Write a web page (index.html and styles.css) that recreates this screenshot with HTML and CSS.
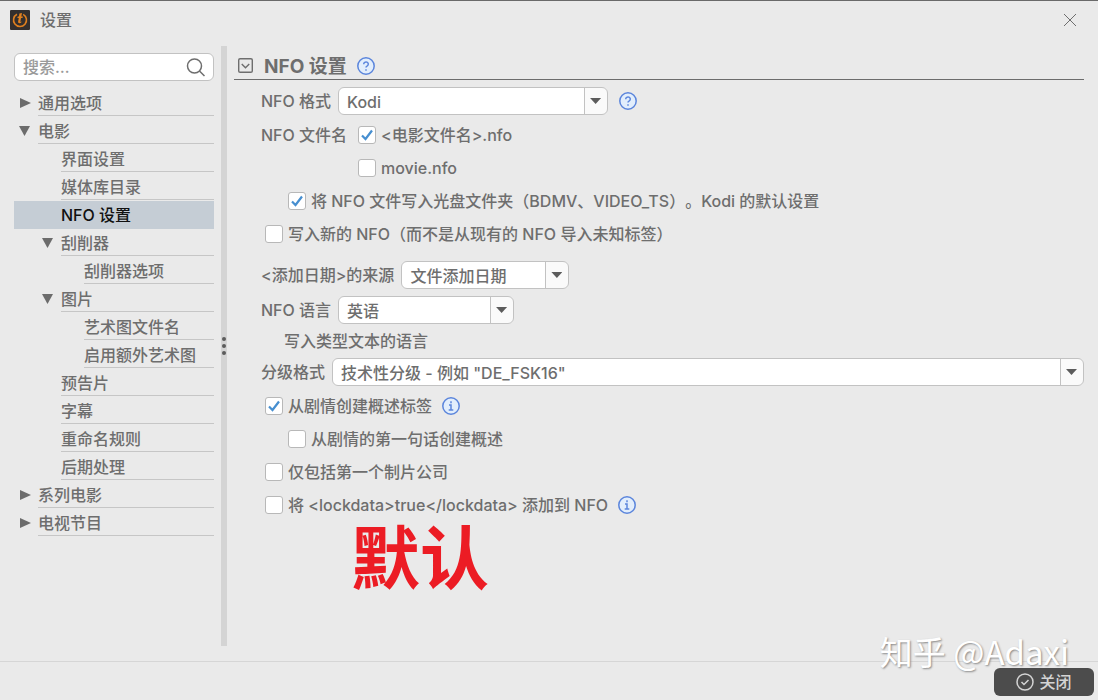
FILE: index.html
```html
<!DOCTYPE html>
<html lang="zh-CN">
<head>
  <meta charset="UTF-8" />
  <meta name="viewport" content="width=device-width, initial-scale=1.0" />
  <title>设置</title>
  <link rel="stylesheet" href="styles.css">
</head>
<body>

  <header class="titlebar">
    <svg class="logo" viewBox="0 0 20 20">
      <rect width="20" height="20" rx="1" fill="#332f2e"/>
      <path d="M7 4.3A6.5 6.5 0 1 0 13.2 4.4" fill="none" stroke="#e0801f" stroke-width="1.6"/>
      <path d="M9.4 3.6l2.6-.6-.7 3.5h1.6l-.4 1.6h-1.5l-.6 3.3q0 .9 1.5.1-.8 1.9-2.6 1.8-1.5-.1-1.2-1.8l.7-3.4H7.3l.4-1.4 1.3-.4z" fill="#e0801f"/>
    </svg>
    <h1>设置</h1>
    <button class="close-x" aria-label="关闭窗口">
      <svg viewBox="0 0 14 14"><path d="M1 1l12 12M13 1L1 13"/></svg>
    </button>
  </header>

  <main>
    <aside>
      <div class="search">
        <input type="text" placeholder="搜索…" aria-label="搜索">
        <svg viewBox="0 0 20 20"><circle cx="8.5" cy="8" r="7"/><path d="M13.5 13l5 5"/></svg>
      </div>

      <!-- Tree menu -->
      <nav class="tree">
        <a href="#" class="closed"><span>通用选项</span></a>
        <a href="#" class="open"><span>电影</span></a>
        <a href="#" class="lv2"><span>界面设置</span></a>
        <a href="#" class="lv2"><span>媒体库目录</span></a>
        <a href="#" class="lv2 active"><span>NFO 设置</span></a>
        <a href="#" class="lv2 open"><span>刮削器</span></a>
        <a href="#" class="lv3"><span>刮削器选项</span></a>
        <a href="#" class="lv2 open"><span>图片</span></a>
        <a href="#" class="lv3"><span>艺术图文件名</span></a>
        <a href="#" class="lv3"><span>启用额外艺术图</span></a>
        <a href="#" class="lv2"><span>预告片</span></a>
        <a href="#" class="lv2"><span>字幕</span></a>
        <a href="#" class="lv2"><span>重命名规则</span></a>
        <a href="#" class="lv2"><span>后期处理</span></a>
        <a href="#" class="closed"><span>系列电影</span></a>
        <a href="#" class="closed"><span>电视节目</span></a>
      </nav>
    </aside>

    <div class="splitter"><i></i><i></i><i></i></div>

    <section>
      <div class="section-head">
        <button class="fold" aria-label="折叠">
          <svg viewBox="0 0 16 16"><rect x=".75" y=".75" width="14.5" height="14.5" rx="1.5"/><path d="M4 6.5l4 4 4-4"/></svg>
        </button>
        <h2>NFO 设置</h2>
        <button class="hint-icon" aria-label="帮助">
          <svg viewBox="0 0 18 18"><circle cx="9" cy="9" r="8.2"/><path d="M6.7 7.2a2.3 2.1 0 1 1 3.6 1.6Q9 9.5 9 10.6M9 12.2v1.6"/></svg>
        </button>
      </div>

      <form>
        <div class="row">
          <label for="format">NFO 格式</label>
          <span class="select w-format"><select id="format"><option>Kodi</option></select></span>
          <button type="button" class="hint-icon" aria-label="帮助">
            <svg viewBox="0 0 18 18"><circle cx="9" cy="9" r="8.2"/><path d="M6.7 7.2a2.3 2.1 0 1 1 3.6 1.6Q9 9.5 9 10.6M9 12.2v1.6"/></svg>
          </button>
        </div>

        <div class="checks">
          <div class="names">
            <span>NFO 文件名</span>
            <label class="check"><input type="checkbox" checked>&lt;电影文件名&gt;.nfo</label>
            <label class="check second"><input type="checkbox">movie.nfo</label>
          </div>
          <label class="check in2"><input type="checkbox" checked>将 NFO 文件写入光盘文件夹（BDMV、VIDEO_TS）。Kodi 的默认设置</label>
          <label class="check in1"><input type="checkbox">写入新的 NFO（而不是从现有的 NFO 导入未知标签）</label>
        </div>

        <div class="row date-row">
          <label for="date">&lt;添加日期&gt;的来源</label>
          <span class="select w-date"><select id="date"><option>文件添加日期</option></select></span>
        </div>

        <div class="row">
          <label for="lang">NFO 语言</label>
          <span class="select w-lang"><select id="lang"><option>英语</option></select></span>
        </div>
        <p class="note">写入类型文本的语言</p>

        <div class="row">
          <label for="rating">分级格式</label>
          <span class="select w-full"><select id="rating"><option>技术性分级 - 例如 "DE_FSK16"</option></select></span>
        </div>

        <div class="checks">
          <div class="with-info">
            <label class="check in1"><input type="checkbox" checked>从剧情创建概述标签</label>
            <button type="button" class="hint-icon" aria-label="说明">
              <svg viewBox="0 0 18 18"><circle cx="9" cy="9" r="8.2"/><path d="M9 4.2v2M7 8h2v5M6.7 13.1h4.6"/></svg>
            </button>
          </div>
          <label class="check in2"><input type="checkbox">从剧情的第一句话创建概述</label>
          <label class="check in1"><input type="checkbox">仅包括第一个制片公司</label>
          <div class="with-info">
            <label class="check in1"><input type="checkbox">将 &lt;lockdata&gt;true&lt;/lockdata&gt; 添加到 NFO</label>
            <button type="button" class="hint-icon" aria-label="说明">
              <svg viewBox="0 0 18 18"><circle cx="9" cy="9" r="8.2"/><path d="M9 4.2v2M7 8h2v5M6.7 13.1h4.6"/></svg>
            </button>
          </div>
        </div>
      </form>

      <p class="big-note">默认</p>
    </section>
  </main>

  <footer>
    <button class="btn-close">
      <svg viewBox="0 0 18 18"><circle cx="9" cy="9" r="8"/><path d="M5.5 9l2.5 2.5 4.5-4.5"/></svg>
      关闭
    </button>
    <div class="watermark">知乎 @Adaxi</div>
  </footer>

</body>
</html>
```
FILE: styles.css
```css
* { margin: 0; padding: 0; box-sizing: border-box; }
body {
  font-family: Inter, 'Noto Sans CJK SC', sans-serif;
  font-size: 16px;
  font-weight: 500;
  line-height: 28px;
  text-spacing-trim: space-all;
  background: #eaeaea;
  color: #6e6e6e;
  min-height: 100vh;
  display: flex;
  flex-direction: column;
}
button, input, select { font: inherit; color: inherit; }
button { background: none; border: none; cursor: pointer; }
svg { display: block; fill: none; stroke: currentColor; }

/* Title bar */
.titlebar {
  display: flex;
  align-items: center;
  height: 39px;
  padding: 0 21px 0 10px;
  border-top: 1px solid #6a6a6a;
}
.logo { width: 20px; height: 20px; stroke: none; }
.titlebar h1 {
  flex: 1;
  margin-left: 10px;
  font-size: 16px;
  font-weight: 500;
}
.close-x svg { width: 14px; height: 14px; }

main {
  flex: 1;
  display: flex;
  padding: 7px 14px 15px;
}

/* Sidebar */
aside { width: 200px; padding-top: 7px; flex-shrink: 0; }
.search { position: relative; margin-bottom: 8px; }
.search input {
  display: block;
  width: 100%;
  height: 28px;
  padding: 0 34px 0 8px;
  background: #fff;
  border: 1px solid #c2c2c2;
  border-radius: 6px;
}
.search input::placeholder { color: #9a9a9a; }
.search svg {
  position: absolute;
  top: 5px;
  right: 8px;
  width: 20px;
  height: 20px;
  stroke-width: 1.5;
}
.tree a {
  display: flex;
  height: 28px;
  padding-left: 24px;
  position: relative;
  color: inherit;
  text-decoration: none;
}
.tree a.lv2 { padding-left: 47px; }
.tree a.lv3 { padding-left: 70px; }
.tree span {
  flex: 1;
  height: 27px;
  border-bottom: 1px solid #c6c6c6;
}
.tree a.active { background: #c5cdd5; color: #111; }
.tree a.active span { border-color: transparent; }
.tree .open::before, .tree .closed::before {
  content: '';
  position: absolute;
  left: 6px;
  top: 9px;
  width: 11px;
  height: 10px;
  background: #6c6c6c;
  clip-path: polygon(0 0, 100% 50%, 0 100%);
}
.tree .open::before { left: 5px; clip-path: polygon(0 0, 100% 0, 50% 100%); }
.tree .lv2.open::before { left: 28px; }

.splitter {
  width: 6px;
  margin: 0 7px;
  background: #d4d4d4;
  display: flex;
  flex-direction: column;
  align-items: center;
  justify-content: center;
  gap: 3px;
}
.splitter i { width: 4px; height: 4px; border-radius: 50%; background: #5c5c5c; }

/* Content */
section { flex: 1; padding-top: 6px; }
.section-head {
  display: flex;
  align-items: center;
  height: 28px;
  padding-left: 4px;
  border-bottom: 1px solid #6c6c6c;
}
.fold svg { width: 15px; height: 15px; stroke-width: 1.5; }
.section-head h2 { font-size: 19px; line-height: 24px; margin: 2px 10px 0 11px; }
.hint-icon { color: #5c86dc; }
.hint-icon svg { width: 18px; height: 18px; stroke-width: 1.5; }
.hint-icon circle { fill: #e2eefc; }

form { padding: 7px 0 0 27px; }
.row {
  display: flex;
  align-items: center;
  gap: 7px;
}
.select { position: relative; }
.w-format { width: 270px; margin-right: 4px; }
.w-date { width: 168px; }
.w-lang { width: 176px; }
.w-full { flex: 1; }
.select select {
  display: block;
  width: 100%;
  height: 28px;
  padding: 0 28px 2px 8px;
  appearance: none;
  background: linear-gradient(to right, #c2c2c2 1px, #fafafa 1px) right / 23px 100% no-repeat #fff;
  border: 1px solid #c2c2c2;
  border-radius: 6px;
}
.select::after {
  content: '';
  position: absolute;
  right: 7px;
  top: 11px;
  width: 11px;
  height: 6px;
  background: #5c5c5c;
  clip-path: polygon(0 0, 100% 0, 50% 100%);
  pointer-events: none;
}

.checks { padding: 3px 0 1px; }
.check {
  display: flex;
  align-items: center;
  gap: 5px;
  height: 33px;
}
.check input {
  width: 18px;
  height: 18px;
  appearance: none;
  background: #fff center / 16px 16px no-repeat;
  border: 1px solid #b8b8b8;
  border-radius: 3px;
}
.check input:checked {
  background-image: url("data:image/svg+xml,%3Csvg xmlns='http://www.w3.org/2000/svg' viewBox='0 0 16 16'%3E%3Cpath d='M3 8.5L6.5 12L13 3.5' fill='none' stroke='%23478fd0' stroke-width='2.2'/%3E%3C/svg%3E");
}
.names {
  display: grid;
  grid-template-columns: 97px 1fr;
  align-items: center;
}
.names .second { grid-column: 2; }
.in1 { margin-left: 4px; }
.in2 { margin-left: 27px; }
.with-info { display: flex; align-items: center; gap: 10px; }
.date-row { margin: 10px 0 7px; }
.note { padding-left: 23px; line-height: 34px; }
.big-note {
  margin-left: 117px;
  color: #ec1c24;
  font-size: 69px;
  font-weight: 700;
  line-height: 74px;
}

/* Footer */
footer {
  position: relative;
  display: flex;
  justify-content: flex-end;
  padding: 6px 4px 4px;
  border-top: 1px solid #d6d6d6;
}
.btn-close {
  display: flex;
  align-items: center;
  justify-content: center;
  gap: 5px;
  width: 100px;
  height: 28px;
  border-radius: 6px;
  background: #4c4c4c;
  color: #d4d4d4;
}
.btn-close svg { width: 18px; height: 18px; stroke-width: 1.5; }
.watermark {
  position: absolute;
  right: 29px;
  top: -27px;
  font-family: 'Noto Sans CJK SC', sans-serif;
  font-size: 33px;
  font-weight: 400;
  line-height: 32px;
  color: #fff;
  text-shadow: 1px 1px 2px #888;
  pointer-events: none;
}
```
